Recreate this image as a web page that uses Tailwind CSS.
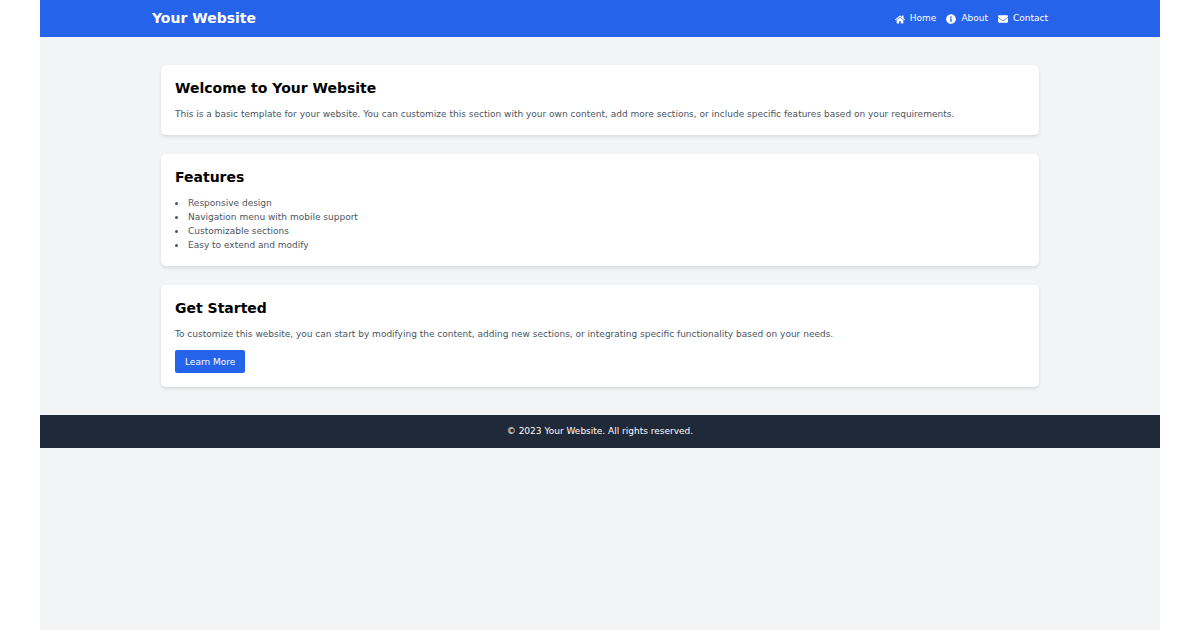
<!DOCTYPE html>
<html lang="en">
<head>
<meta charset="UTF-8">
<meta name="viewport" content="width=device-width, initial-scale=1">
<title>Your Website</title>
<script src="https://cdn.jsdelivr.net/npm/@tailwindcss/browser@4"></script>
</head>
<body class="bg-white px-10 font-['DejaVu_Sans',sans-serif] text-[9px] leading-[14px]">
<div class="min-h-screen bg-[#f3f4f6]">
  <header class="bg-[#2563eb] text-white">
    <div class="mx-auto flex max-w-[896px] items-center justify-between py-[9px]">
      <h1 class="text-[14px] leading-[19px] font-bold">Your Website</h1>
      <nav class="flex gap-[10px] pb-px">
        <a href="#home" class="flex items-center gap-[5px]">
          <svg class="mt-[2px] h-[9px] w-[10px]" viewBox="0 0 576 512" fill="currentColor" aria-hidden="true"><path d="M280.37 148.26L96 300.11V464a16 16 0 0 0 16 16l112.06-.29a16 16 0 0 0 15.92-16V368a16 16 0 0 1 16-16h64a16 16 0 0 1 16 16v95.64a16 16 0 0 0 16 16.05L464 480a16 16 0 0 0 16-16V300L295.67 148.26a12.19 12.19 0 0 0-15.3 0zM571.6 251.47L488 182.56V44.05a12 12 0 0 0-12-12h-56a12 12 0 0 0-12 12v72.61L318.47 43a48 48 0 0 0-61 0L4.34 251.47a12 12 0 0 0-1.6 16.9l25.5 31A12 12 0 0 0 45.15 301l235.22-193.74a12.19 12.19 0 0 1 15.3 0L530.9 301a12 12 0 0 0 16.9-1.6l25.5-31a12 12 0 0 0-1.7-16.93z"/></svg>
          Home</a>
        <a href="#about" class="flex items-center gap-[5px]">
          <svg class="mt-[2px] h-[10px] w-[10px]" viewBox="0 0 512 512" fill="currentColor" aria-hidden="true"><path d="M256 8C119.043 8 8 119.083 8 256c0 136.997 111.043 248 248 248s248-111.003 248-248C504 119.083 392.957 8 256 8zm0 110c23.196 0 42 18.804 42 42s-18.804 42-42 42-42-18.804-42-42 18.804-42 42-42zm56 254c0 6.627-5.373 12-12 12h-88c-6.627 0-12-5.373-12-12v-24c0-6.627 5.373-12 12-12h12v-64h-12c-6.627 0-12-5.373-12-12v-24c0-6.627 5.373-12 12-12h64c6.627 0 12 5.373 12 12v100h12c6.627 0 12 5.373 12 12v24z"/></svg>
          About</a>
        <a href="#contact" class="flex items-center gap-[5px]">
          <svg class="mt-[2px] h-[10px] w-[10px]" viewBox="0 0 512 512" fill="currentColor" aria-hidden="true"><path d="M502.3 190.8c3.9-3.1 9.7-.2 9.7 4.7V400c0 26.500-21.500 48-48 48H48c-26.500 0-48-21.500-48-48V195.600c0-5 5.700-7.800 9.700-4.700 22.400 17.400 52.100 39.500 154.100 113.600 21.100 15.400 56.700 47.800 92.200 47.600 35.700.3 72-32.800 92.300-47.600 102-74.100 131.600-96.300 154-113.700zM256 320c23.200.4 56.600-29.200 73.400-41.400 132.700-96.300 142.800-104.700 173.400-128.700 5.800-4.500 9.200-11.500 9.200-18.900v-19c0-26.500-21.500-48-48-48H48c-26.500 0-48 21.500-48 48v19c0 7.400 3.400 14.300 9.200 18.900 30.600 23.900 40.700 32.400 173.400 128.700 16.800 12.200 50.200 41.800 73.400 41.400z"/></svg>
          Contact</a>
      </nav>
    </div>
  </header>
  <main class="mx-auto flex max-w-[896px] flex-col gap-[19px] px-[9px] py-7 text-[#4b5563]">
    <section id="home" class="rounded-[5px] bg-white p-[14px] shadow-[0_2px_4px_-1px_rgba(0,0,0,0.15)]">
      <h2 class="mb-[9px] text-[14px] leading-[19px] font-bold text-black">Welcome to Your Website</h2>
      <p>This is a basic template for your website. You can customize this section with your own content, add more sections, or include specific features based on your requirements.</p>
    </section>
    <section id="about" class="rounded-[5px] bg-white p-[14px] shadow-[0_2px_4px_-1px_rgba(0,0,0,0.15)]">
      <h2 class="mb-[9px] text-[14px] leading-[19px] font-bold text-black">Features</h2>
      <ul class="list-inside list-disc">
        <li>Responsive design</li>
        <li>Navigation menu with mobile support</li>
        <li>Customizable sections</li>
        <li>Easy to extend and modify</li>
      </ul>
    </section>
    <section id="contact" class="rounded-[5px] bg-white p-[14px] shadow-[0_2px_4px_-1px_rgba(0,0,0,0.15)]">
      <h2 class="mb-[9px] text-[14px] leading-[19px] font-bold text-black">Get Started</h2>
      <p class="mb-[9px]">To customize this website, you can start by modifying the content, adding new sections, or integrating specific functionality based on your needs.</p>
      <button type="button" class="block rounded-[2px] bg-[#2563eb] px-[10px] pt-[5px] pb-1 text-white">Learn More</button>
    </section>
  </main>
  <footer class="bg-[#1f2937] pt-[9px] pb-[10px] text-center text-white">
    <p>© 2023 Your Website. All rights reserved.</p>
  </footer>
</div>
</body>
</html>
